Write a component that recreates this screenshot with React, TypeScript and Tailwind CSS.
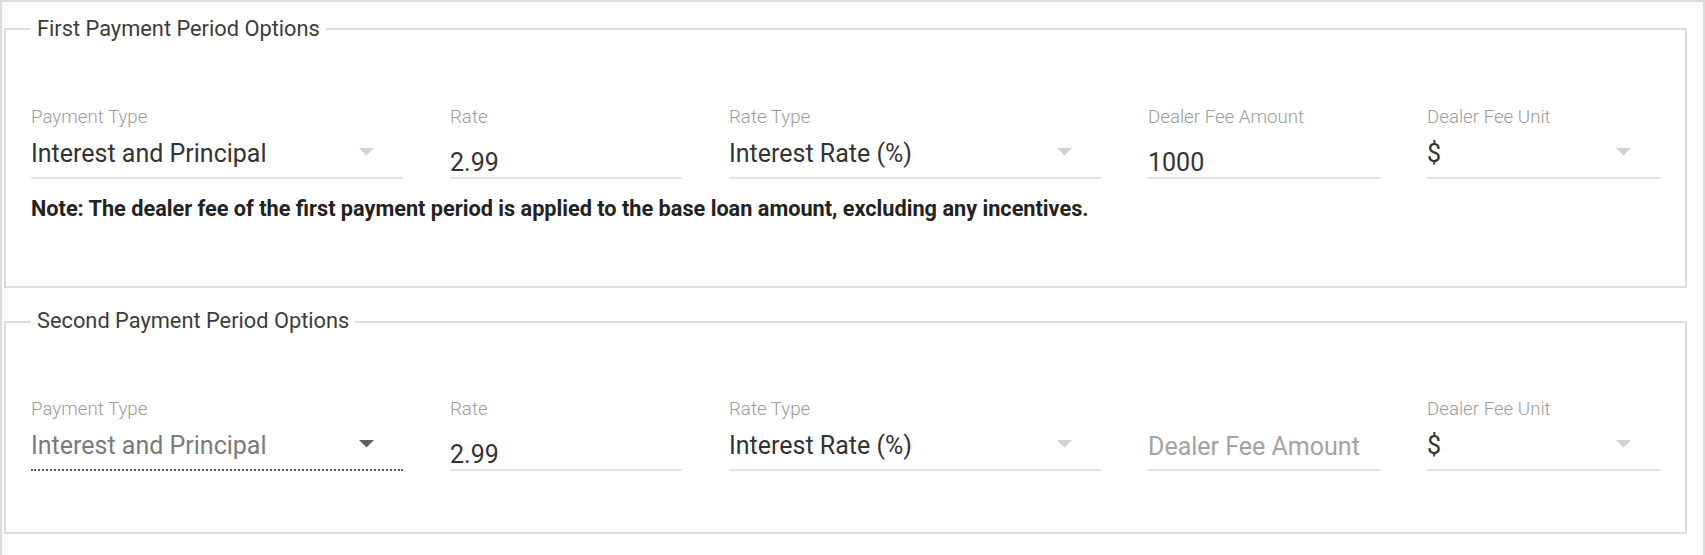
import React from 'react';

type Field = {
    label?: string;
    value?: string;
    placeholder?: string;
    kind: 'select' | 'input';
    disabled?: boolean;
    darkArrow?: boolean;
};

const Arrow: React.FC<{ dark?: boolean }> = ({ dark }) => (
    <svg width="15" height="8" viewBox="0 0 15 8" className="mt-[21px] mr-[29px] shrink-0">
        <polygon points="0,0 15,0 7.5,7.5" fill={dark ? '#5f5f5f' : '#d2d2d2'} />
    </svg>
);

const FormField: React.FC<{ field: Field }> = ({ field }) => {
    const underline = field.disabled
        ? 'border-b-2 border-dotted border-[#5a5a5a]'
        : 'border-b-2 border-solid border-[#e4e4e4]';

    return (
        <div className="flex flex-col">
            <div className="h-[19px] text-[18.7px] leading-none font-light text-[#9b9b9b] whitespace-nowrap">
                {field.label}
            </div>
            <div className={`h-[52px] flex justify-between ${underline}`}>
                {field.kind === 'select' ? (
                    <>
                        <span
                            className={`mt-[14px] text-[25px] leading-none whitespace-nowrap ${
                                field.disabled ? 'text-[#7a7a7a]' : 'text-[#333333]'
                            }`}
                        >
                            {field.value}
                        </span>
                        <Arrow dark={field.darkArrow} />
                    </>
                ) : field.value ? (
                    <span className="mt-[23px] text-[25px] leading-none text-[#333333]">{field.value}</span>
                ) : (
                    <span className="mt-[15px] text-[25px] leading-none text-[#a3a3a3]">{field.placeholder}</span>
                )}
            </div>
        </div>
    );
};

const Section: React.FC<{ title: string; fields: Field[]; note?: string; className?: string }> = ({
    title,
    fields,
    note,
    className,
}) => (
    <fieldset className={`border-2 border-[#dcdcdc] pl-[25px] pr-0 pt-[62px] ${className ?? ''}`}>
        <legend className="px-[6px] text-[21.8px] text-[#3c3c3c]">{title}</legend>
        <div className="grid grid-cols-[372px_232px_372px_232px_233px] gap-x-[47px]">
            {fields.map((f, i) => (
                <FormField key={i} field={f} />
            ))}
        </div>
        {note && (
            <p className="mt-[14px] text-[21.7px] font-bold text-[#222222] whitespace-nowrap">{note}</p>
        )}
    </fieldset>
);

const App: React.FC = () => {
    const first: Field[] = [
        { label: 'Payment Type', value: 'Interest and Principal', kind: 'select' },
        { label: 'Rate', value: '2.99', kind: 'input' },
        { label: 'Rate Type', value: 'Interest Rate (%)', kind: 'select' },
        { label: 'Dealer Fee Amount', value: '1000', kind: 'input' },
        { label: 'Dealer Fee Unit', value: '$', kind: 'select' },
    ];

    const second: Field[] = [
        { label: 'Payment Type', value: 'Interest and Principal', kind: 'select', disabled: true, darkArrow: true },
        { label: 'Rate', value: '2.99', kind: 'input' },
        { label: 'Rate Type', value: 'Interest Rate (%)', kind: 'select' },
        { placeholder: 'Dealer Fee Amount', kind: 'input' },
        { label: 'Dealer Fee Unit', value: '$', kind: 'select' },
    ];

    return (
        <div
            className="min-h-[600px] bg-white border-2 border-b-0 border-[#dcdcdc] pt-[11px] pl-[2px] pr-[16px]"
            style={{ fontFamily: 'Roboto, "Liberation Sans", sans-serif' }}
        >
            <Section
                title="First Payment Period Options"
                fields={first}
                note="Note: The dealer fee of the first payment period is applied to the base loan amount, excluding any incentives."
                className="pb-[61px]"
            />
            <Section title="Second Payment Period Options" fields={second} className="mt-[17px] pb-[61px]" />
        </div>
    );
};

export default App;
